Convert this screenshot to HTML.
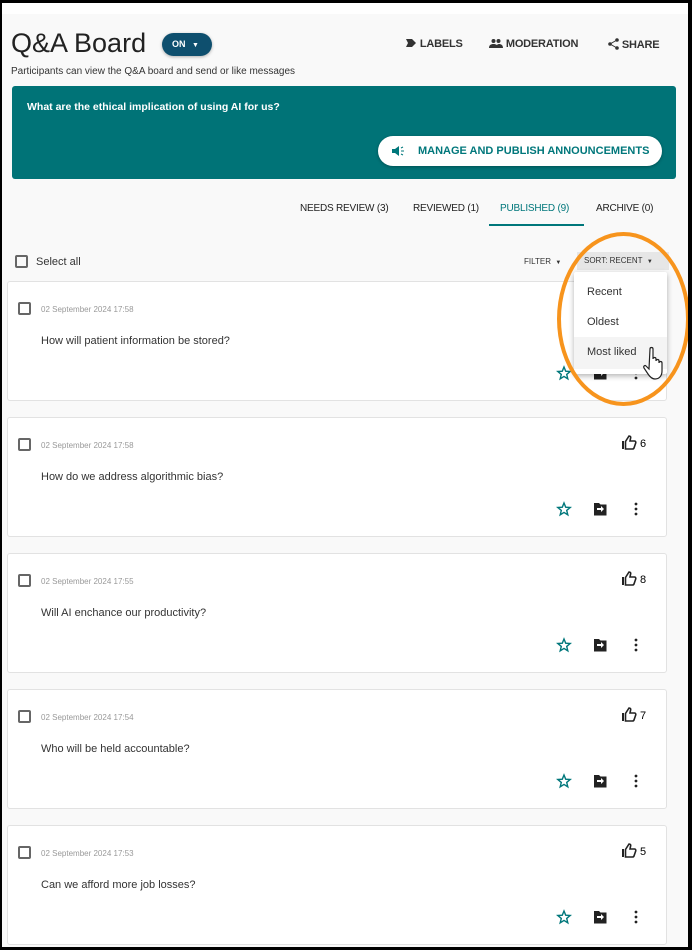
<!DOCTYPE html>
<html><head><style>
*{box-sizing:border-box;margin:0;padding:0}
body{width:692px;height:950px;overflow:hidden;background:#000;font-family:"Liberation Sans",sans-serif;position:relative}
#pg{position:absolute;left:2px;top:3px;width:686px;height:944px;background:#f9f9f9;overflow:hidden}
#pg .wt{position:absolute;left:0;top:0;width:100%;height:11px;background:#fff}
.a{position:absolute}
.t{color:#333;font-size:11px;font-weight:bold;letter-spacing:-.2px}
.card{position:absolute;left:5px;width:660px;height:120px;background:#fff;border:1px solid #e2e2e2;border-radius:3px}
.cb{position:absolute;width:13px;height:13px;border:2px solid #666;border-radius:2px}
.date{position:absolute;left:33px;top:23px;font-size:8px;color:#999}
.q{position:absolute;left:33px;top:53px;font-size:11px;color:#333}
</style></head><body><div id="pg"><div class="wt"></div>
<div class="a" style="left:9px;top:25px;font-size:27px;color:#222">Q&amp;A Board</div>
<div class="a" style="left:160px;top:30px;width:50px;height:23px;background:#0e4f6e;border-radius:12px;color:#fff;font-size:9px;font-weight:bold;line-height:23px;padding-left:10px;box-shadow:0 1px 3px rgba(0,0,0,.3)">ON <span style="font-size:7px;margin-left:4px">▼</span></div>
<div class="a t" style="left:403px;top:35px">
<svg width="12" height="10" viewBox="0 0 12 10" style="vertical-align:-1px"><path d="M1 1h6l4 4-4 4H1l2-4z" fill="#333"/></svg> LABELS</div>
<div class="a t" style="left:487px;top:35px"><svg width="14" height="10" viewBox="0 0 14 10" style="vertical-align:-1px"><circle cx="4.5" cy="3" r="2" fill="#333"/><circle cx="9.5" cy="3" r="2" fill="#333"/><path d="M0 10c0-3 2-4 4.5-4S9 7 9 10zM7 10c0-2 1-4 3-4s4 1 4 4z" fill="#333"/></svg> MODERATION</div>
<div class="a t" style="left:606px;top:35px"><svg width="11" height="12" viewBox="0 0 11 12" style="vertical-align:-2px"><circle cx="9" cy="2" r="1.8" fill="#333"/><circle cx="2" cy="6" r="1.8" fill="#333"/><circle cx="9" cy="10" r="1.8" fill="#333"/><path d="M9 2L2 6l7 4" stroke="#333" fill="none"/></svg> SHARE</div>
<div class="a" style="left:9px;top:63px;font-size:10px;color:#333">Participants can view the Q&amp;A board and send or like messages</div>
<div class="a" style="left:10px;top:83px;width:664px;height:93px;background:#007377;border-radius:3px">
<div class="a" style="left:15px;top:15px;color:#fff;font-size:10.5px;font-weight:bold">What are the ethical implication of using AI for us?</div>
<div class="a" style="left:366px;top:50px;width:284px;height:30px;background:#fff;border-radius:15px;box-shadow:0 1px 3px rgba(0,0,0,.3);color:#00777b;font-size:11px;font-weight:bold;line-height:30px;padding-left:40px">MANAGE AND PUBLISH ANNOUNCEMENTS
<svg class="a" style="left:14px;top:10px" width="12" height="10" viewBox="0 0 12 10"><path d="M0 3h3l4-3v10L3 7H0z" fill="#00777b"/><path d="M9 2l2-1M9 5h3M9 8l2 1" stroke="#00777b"/></svg></div></div>
<div class="a t" style="left:298px;top:200px;font-weight:normal;font-size:10px;color:#222">NEEDS REVIEW (3)</div>
<div class="a t" style="left:411px;top:200px;font-weight:normal;font-size:10px;color:#222">REVIEWED (1)</div>
<div class="a t" style="left:498px;top:200px;font-weight:normal;font-size:10px;color:#00777b">PUBLISHED (9)</div>
<div class="a" style="left:487px;top:221px;width:95px;height:2px;background:#00777b"></div>
<div class="a t" style="left:594px;top:200px;font-weight:normal;font-size:10px;color:#222">ARCHIVE (0)</div>
<div class="cb" style="left:13px;top:252px"></div>
<div class="a" style="left:34px;top:253px;font-size:11px;color:#333">Select all</div>
<div class="a" style="left:522px;top:254px;font-size:8px;color:#333">FILTER &nbsp;<span style="font-size:6px">▼</span></div>
<div class="a" style="left:575px;top:249px;width:92px;height:18px;background:#e6e6e6;font-size:8px;color:#333;line-height:18px;padding-left:7px">SORT: RECENT &nbsp;<span style="font-size:6px">▼</span></div>

<div class="card" style="top:278px"><div class="cb" style="left:10px;top:20px"></div><div class="date">02 September 2024 17:58</div><div class="q">How will patient information be stored?</div></div>
<div class="card" style="top:414px"><div class="cb" style="left:10px;top:20px"></div><div class="date">02 September 2024 17:58</div><div class="q">How do we address algorithmic bias?</div></div>
<div class="card" style="top:550px"><div class="cb" style="left:10px;top:20px"></div><div class="date">02 September 2024 17:55</div><div class="q">Will AI enchance our productivity?</div></div>
<div class="card" style="top:686px"><div class="cb" style="left:10px;top:20px"></div><div class="date">02 September 2024 17:54</div><div class="q">Who will be held accountable?</div></div>
<div class="card" style="top:822px"><div class="cb" style="left:10px;top:20px"></div><div class="date">02 September 2024 17:53</div><div class="q">Can we afford more job losses?</div></div>

<svg width="0" height="0" style="position:absolute"><defs>
<g id="lk"><path d="M1 6h2v8H1z" fill="#222"/><path d="M4.5 6.5L8 1c1.5 0 2 1 1.5 2.5L9 6h4.5c1 0 1.5 1 1.2 2l-1.7 5c-.3.7-.8 1-1.5 1H4.5z" fill="none" stroke="#222" stroke-width="1.6"/></g>
<g id="ac"><path d="M7 1l1.7 4.2 4.5.3-3.5 2.9 1.1 4.4L7 10.4 3.2 12.8l1.1-4.4L.8 5.5l4.5-.3z" fill="none" stroke="#00777b" stroke-width="1.4" transform="translate(-7 -7)"/>
<path d="M30 -6h5l1.5 1.5h6v11h-12.5z" fill="#222" /><path d="M33 -1h4v-2l3 3-3 3v-2h-4z" fill="#fff"/>
<circle cx="72" cy="-5" r="1.4" fill="#222"/><circle cx="72" cy="0" r="1.4" fill="#222"/><circle cx="72" cy="5" r="1.4" fill="#222"/></g></defs></svg>
<svg class="a" style="left:548px;top:360px" width="100" height="20"><use href="#ac" transform="translate(14 10)"/></svg>
<svg class="a" style="left:548px;top:496px" width="100" height="20"><use href="#ac" transform="translate(14 10)"/></svg>
<svg class="a" style="left:548px;top:632px" width="100" height="20"><use href="#ac" transform="translate(14 10)"/></svg>
<svg class="a" style="left:548px;top:768px" width="100" height="20"><use href="#ac" transform="translate(14 10)"/></svg>
<svg class="a" style="left:548px;top:904px" width="100" height="20"><use href="#ac" transform="translate(14 10)"/></svg>
<div class="a" style="left:619px;top:432px;font-size:11px"><svg width="16" height="15" style="vertical-align:-3px"><use href="#lk"/></svg> 6</div>
<div class="a" style="left:619px;top:568px;font-size:11px"><svg width="16" height="15" style="vertical-align:-3px"><use href="#lk"/></svg> 8</div>
<div class="a" style="left:619px;top:704px;font-size:11px"><svg width="16" height="15" style="vertical-align:-3px"><use href="#lk"/></svg> 7</div>
<div class="a" style="left:619px;top:840px;font-size:11px"><svg width="16" height="15" style="vertical-align:-3px"><use href="#lk"/></svg> 5</div>

<div class="a" style="left:572px;top:269px;width:93px;height:102px;background:#fff;box-shadow:0 2px 6px rgba(0,0,0,.3);border-radius:2px">
<div class="a" style="left:13px;top:14px;font-size:11px;color:#333">Recent</div>
<div class="a" style="left:13px;top:44px;font-size:11px;color:#333">Oldest</div>
<div class="a" style="left:0;top:65px;width:93px;height:32px;background:#f4f4f4"></div>
<div class="a" style="left:13px;top:74px;font-size:11px;color:#333">Most liked</div></div>
<svg class="a" style="left:641px;top:343px" width="26" height="38" viewBox="0 0 26 38"><path d="M7 3c0-2 3-2 3 0v10c0-2 3-2 3 0v2c0-2 3-2 3 0v2c0-2 3-2 3 0v8c0 5-3 8-7 8-3 0-5-2-7-5l-4-6c-1-2 1-3 2-2l3 3z" fill="#fff" stroke="#222" stroke-width="1.2"/></svg>
<div class="a" style="left:555px;top:229px;width:133px;height:174px;border:4px solid #f7941d;border-radius:50%"></div>
</div></body></html>
